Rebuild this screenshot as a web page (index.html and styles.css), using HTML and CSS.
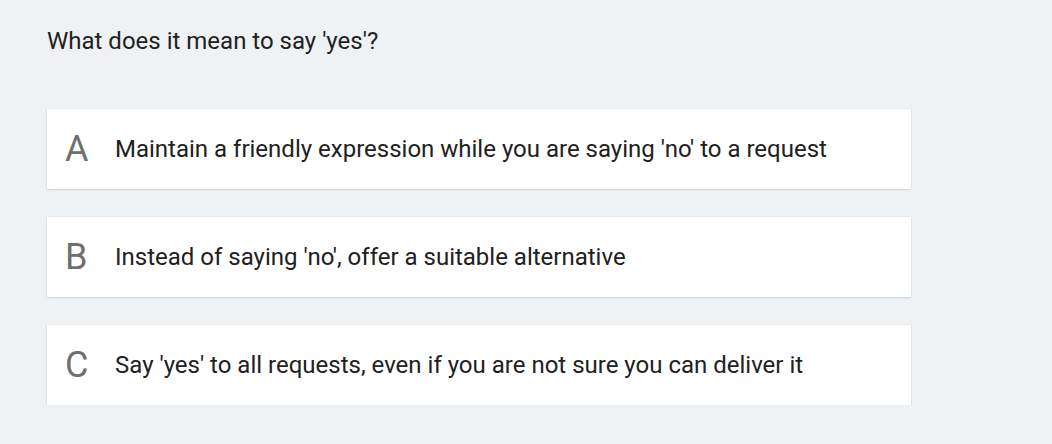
FILE: index.html
```html
<!DOCTYPE html>
<html>
<head>
<meta charset="utf-8">
<link rel="stylesheet" href="styles.css">
</head>
<body>
<div class="quiz">
  <div class="question">What does it mean to say 'yes'?</div>
  <div class="options">
    <div class="option"><span class="letter">A</span><span class="text">Maintain a friendly expression while you are saying 'no' to a request</span></div>
    <div class="option"><span class="letter">B</span><span class="text">Instead of saying 'no', offer a suitable alternative</span></div>
    <div class="option"><span class="letter">C</span><span class="text">Say 'yes' to all requests, even if you are not sure you can deliver it</span></div>
  </div>
</div>
</body>
</html>
```
FILE: styles.css
```css
html, body {
  margin: 0;
  padding: 0;
  background: #eff2f5;
  font-family: Roboto, "Liberation Sans", sans-serif;
}
.quiz {
  padding: 25px 0 0 47px;
  width: 864px;
}
.question {
  font-size: 24px;
  line-height: 32px;
  color: #212121;
}
.options {
  margin-top: 52px;
  display: flex;
  flex-direction: column;
  gap: 28px;
}
.option {
  background: #fff;
  height: 80px;
  display: flex;
  align-items: center;
  box-shadow: 0 0 1px rgba(0,0,0,0.18), 0 1px 2px rgba(0,0,0,0.1);
}
.letter {
  width: 68px;
  padding-left: 18px;
  box-sizing: border-box;
  font-size: 36px;
  font-weight: 400;
  color: #6f6f6f;
}
.text {
  font-size: 24px;
  color: #212121;
}
```
